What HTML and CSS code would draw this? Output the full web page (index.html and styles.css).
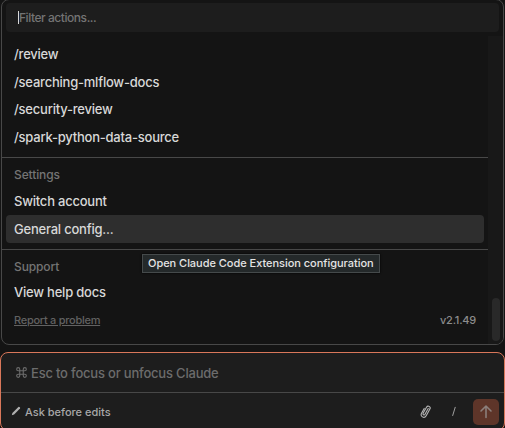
FILE: index.html
```html
<!DOCTYPE html>
<html lang="en">

<head>
  <meta charset="UTF-8" />
  <meta name="viewport" content="width=device-width, initial-scale=1.0" />
  <title>Claude Code</title>
  <link rel="stylesheet" href="styles.css">
</head>

<body>
  <div class="menu">
    <div class="filter"><span class="caret"></span><span class="filter-text">Filter actions...</span></div>
    <div class="menu-body">
      <div class="list">
        <ul class="commands">
          <li>/review</li>
          <li>/searching-mlflow-docs</li>
          <li>/security-review</li>
          <li>/spark-python-data-source</li>
        </ul>
        <div class="section settings">
          <h3>Settings</h3>
          <ul>
            <li>Switch account</li>
            <li class="active">General config...</li>
          </ul>
        </div>
        <div class="section support">
          <h3>Support</h3>
          <ul>
            <li>View help docs</li>
          </ul>
          <div class="menu-footer">
            <a href="#">Report a problem</a>
            <span class="version">v2.1.49</span>
          </div>
        </div>
      </div>
      <div class="scrollbar"><div class="thumb"></div></div>
    </div>
  </div>

  <div class="tooltip">Open Claude Code Extension configuration</div>

  <div class="prompt">
    <div class="prompt-input">
      <svg class="cmd" width="11" height="11" viewBox="0 0 10 10">
        <path d="M3.4 3.4h3.2v3.2H3.4zM3.4 3.4H2A1.4 1.4 0 1 1 3.4 2zM6.6 3.4V2A1.4 1.4 0 1 1 8 3.4zM6.6 6.6H8A1.4 1.4 0 1 1 6.6 8zM3.4 6.6V8A1.4 1.4 0 1 1 2 6.6z" />
      </svg>
      <span>Esc to focus or unfocus Claude</span>
    </div>
    <div class="toolbar">
      <svg class="pencil" width="10" height="10" viewBox="0 0 10 10">
        <path d="M.8 9.2l.6-2.300L7.400 1q.5-.4 1 0l.6.6q.4.500 0 1L3.100 8.600z" />
      </svg>
      <span class="mode">Ask before edits</span>
      <svg class="clip" width="12" height="15" viewBox="0 0 12 15">
        <path d="M8.2 4.6L5 10.2c-.8 1.3-2.6.3-1.9-1L6.5 3.2c1.3-2.3 4.7-.5 3.4 1.9l-3.7 6.6c-1.9 3.3-6.5.7-4.7-2.5l2.7-4.8" />
      </svg>
      <svg class="slash" width="6" height="11" viewBox="0 0 6 11">
        <path d="M4.2 1.300L1.700 9.500" />
      </svg>
      <div class="send">
        <svg width="14" height="16" viewBox="0 0 14 16">
          <path d="M7 13.5V2M2 7L7 2l5 5" />
        </svg>
      </div>
    </div>
  </div>
</body>

</html>
```
FILE: styles.css
```css
* {
  margin: 0;
  padding: 0;
  box-sizing: border-box;
}

body {
  height: 428px;
  overflow: hidden;
  background: #141414;
  color: #d8d8d8;
  font-family: Inter, "Liberation Sans", sans-serif;
  font-size: 13px;
  font-weight: 450;
  letter-spacing: -0.22px;
}

ul {
  list-style: none;
}

.menu {
  width: 503px;
  height: 346px;
  margin: -1px 0 0 1px;
  border: 1px solid #484848;
  border-radius: 8px;
  background: #141414;
  overflow: hidden;
}

.filter {
  display: flex;
  align-items: center;
  width: 493px;
  height: 29px;
  margin: 3px 0 4px 4px;
  padding-left: 12px;
  border-radius: 4px;
  background: #1d1d1d;
  color: #747474;
  font-size: 12px;
  letter-spacing: -0.45px;
}

.caret {
  width: 1px;
  height: 13px;
  background: #d8d8d8;
}

.menu-body {
  display: flex;
  height: 308px;
}

.list {
  width: 486px;
  padding-top: 5px;
}

.list li {
  height: 27.67px;
  margin: 0 4px;
  padding-left: 8px;
  line-height: 27.67px;
  border-radius: 4px;
}

.section {
  border-top: 1px solid #484848;
}

.section h3 {
  padding-left: 12px;
  color: #747474;
  font-size: 12px;
  font-weight: 450;
  letter-spacing: -0.12px;
  line-height: 18px;
}

.settings {
  height: 92px;
  margin-top: 5px;
  padding-top: 8px;
}

.settings h3 {
  margin-bottom: 4px;
}

.settings .active {
  height: 28px;
  line-height: 28px;
  background: #2e2e2e;
}

.support {
  padding-top: 8px;
}

.support h3 {
  margin-bottom: 3px;
}

.menu-footer {
  display: flex;
  justify-content: space-between;
  align-items: center;
  height: 28px;
  padding: 0 12px;
  font-size: 11px;
}

.menu-footer a {
  color: #626262;
  letter-spacing: -0.27px;
}

.version {
  color: #8c8c8c;
}

.scrollbar {
  width: 15px;
  padding: 262px 0 0 4px;
  background: #181818;
}

.thumb {
  width: 8px;
  height: 43px;
  border-radius: 4px;
  background: #292929;
}

/* sits over the list, under the hovered item */
.tooltip {
  position: absolute;
  top: 254px;
  left: 142px;
  width: 238px;
  height: 19px;
  padding-left: 5px;
  border: 1px solid #454a4b;
  background: #24292a;
  box-shadow: 0 0 2px #000;
  color: #e4e4e4;
  font-size: 11px;
  font-weight: 500;
  letter-spacing: -0.03px;
  line-height: 17px;
  white-space: nowrap;
}

.prompt {
  height: 79px;
  margin-top: 7px;
  border: 1px solid #d9775a;
  border-radius: 8px;
  background: #1d1d1d;
}

.prompt-input {
  display: flex;
  align-items: center;
  height: 40px;
  padding-left: 15px;
  border-bottom: 1px solid #484848;
  color: #6c6c6c;
  letter-spacing: -0.2px;
}

.cmd {
  margin-right: 4px;
  fill: none;
  stroke: #6c6c6c;
}

.toolbar {
  display: flex;
  align-items: center;
  height: 37px;
  padding: 0 5px 0 10px;
  color: #a8a8a8;
  font-size: 11px;
  letter-spacing: 0;
}

.pencil {
  margin: 0 4px 2px 0;
  fill: #b0b0b0;
}

.clip {
  margin-left: auto;
  fill: none;
  stroke: #b5b5b5;
  stroke-width: 1.1;
  stroke-linecap: round;
}

.slash {
  margin: 0 16px 0 19px;
  fill: none;
  stroke: #a0a0a0;
  stroke-linecap: round;
}

.send {
  display: flex;
  align-items: center;
  justify-content: center;
  width: 26px;
  height: 26px;
  border-radius: 5px;
  background: #5e3529;
}

.send svg {
  fill: none;
  stroke: #8b7f7b;
  stroke-width: 1.6;
  stroke-linecap: round;
  stroke-linejoin: round;
}
```
